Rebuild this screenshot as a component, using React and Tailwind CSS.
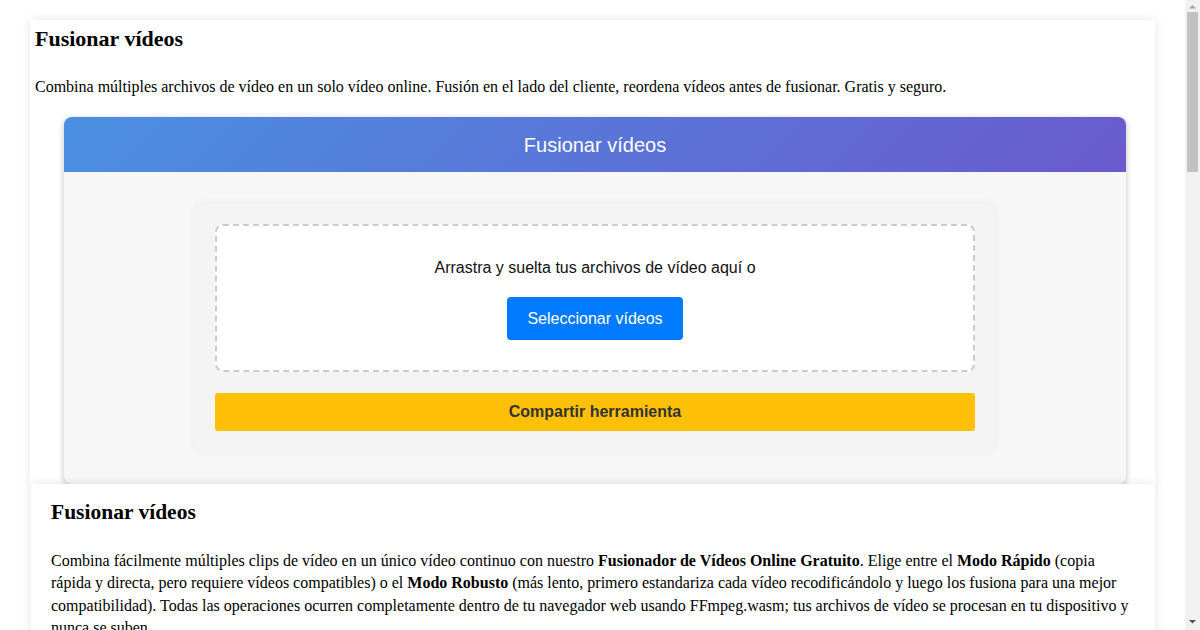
import React from 'react'

const serif = { fontFamily: '"Liberation Serif", "Times New Roman", serif' }

const MoreSection = ({ title, children }) => (
  <div className="mt-6">
    <h3 className="text-[19px] font-bold leading-[24px] mb-3">{title}</h3>
    {children}
  </div>
)

// fake classic scrollbar (the headless browser hides the real one)
const Scrollbar = () => (
  <div className="w-[15px] shrink-0 h-screen bg-[#f1f1f1] flex flex-col items-center">
    <svg width="15" height="12" viewBox="0 0 15 12" className="shrink-0">
      <path d="M4 8.5 L7.5 5 L11 8.5 Z" fill="#a3a3a3" />
    </svg>
    <div className="w-[11px] h-[160px] bg-[#c1c1c1]" />
    <div className="flex-1" />
    <svg width="15" height="14" viewBox="0 0 15 14" className="shrink-0">
      <path d="M4 4 L11 4 L7.5 7.5 Z" fill="#505050" />
    </svg>
  </div>
)

export default function App() {
  return (
    <div className="h-screen flex overflow-hidden bg-white text-black" style={serif}>
      <div className="flex-1 min-w-0 overflow-hidden pt-[20px] px-[30px]">
        <div className="bg-white shadow-[0_0_10px_rgba(0,0,0,0.1)] px-[5px] pt-[5px]">
          <h1 className="text-[22px] font-bold leading-[27px]">Fusionar vídeos</h1>
          <p className="mt-[24px] text-[16px] leading-[22px]">
            Combina múltiples archivos de vídeo en un solo vídeo online. Fusión en el lado del cliente, reordena vídeos antes de fusionar. Gratis y seguro.
          </p>

          <div
            className="mt-[19px] ml-[29px] w-[1062px] rounded-lg overflow-hidden bg-[#f7f7f7] shadow-[0_2px_6px_rgba(0,0,0,0.25)]"
            style={{ fontFamily: '"Liberation Sans", Arial, sans-serif' }}
          >
            <div className="h-[55px] flex items-center justify-center bg-[linear-gradient(135deg,#4a90e2,#6a5acd)]">
              <h2 className="text-white text-[20px] font-normal">Fusionar vídeos</h2>
            </div>
            <div className="pt-[32px] pb-[33px]">
              <div className="mx-auto w-[800px] bg-[#f4f4f4] rounded-lg p-5 shadow-[0_0_8px_rgba(0,0,0,0.06)]">
                <div className="border-2 border-dashed border-[#cccccc] rounded-lg bg-white pt-[30px] pb-[30px] flex flex-col items-center">
                  <p className="text-[16px] leading-[24px] text-[#111]">Arrastra y suelta tus archivos de vídeo aquí o</p>
                  <button className="mt-[17px] h-[43px] px-5 bg-[#007bff] text-white text-[16px] rounded">
                    Seleccionar vídeos
                  </button>
                </div>
                <button className="mt-[21px] w-full h-[38px] bg-[#ffc107] text-[#333] font-bold text-[16px] rounded-[3px]">
                  Compartir herramienta
                </button>
              </div>
            </div>
          </div>
        </div>

        <div className="bg-white shadow-[0_0_10px_rgba(0,0,0,0.1)] ml-px px-5 pt-[15px] pb-8">
          <h2 className="text-[21.5px] font-bold leading-[27px]">Fusionar vídeos</h2>
          <p className="mt-[24px] text-[16px] leading-[22.4px]">
            Combina fácilmente múltiples clips de vídeo en un único vídeo continuo con nuestro <strong>Fusionador de Vídeos Online Gratuito</strong>. Elige entre el <strong>Modo Rápido</strong> (copia rápida y directa, pero requiere vídeos compatibles) o el <strong>Modo Robusto</strong> (más lento, primero estandariza cada vídeo recodificándolo y luego los fusiona para una mejor compatibilidad). Todas las operaciones ocurren completamente dentro de tu navegador web usando FFmpeg.wasm; tus archivos de vídeo se procesan en tu dispositivo y nunca se suben.
          </p>
        </div>
      </div>
      <Scrollbar />
    </div>
  )
}
